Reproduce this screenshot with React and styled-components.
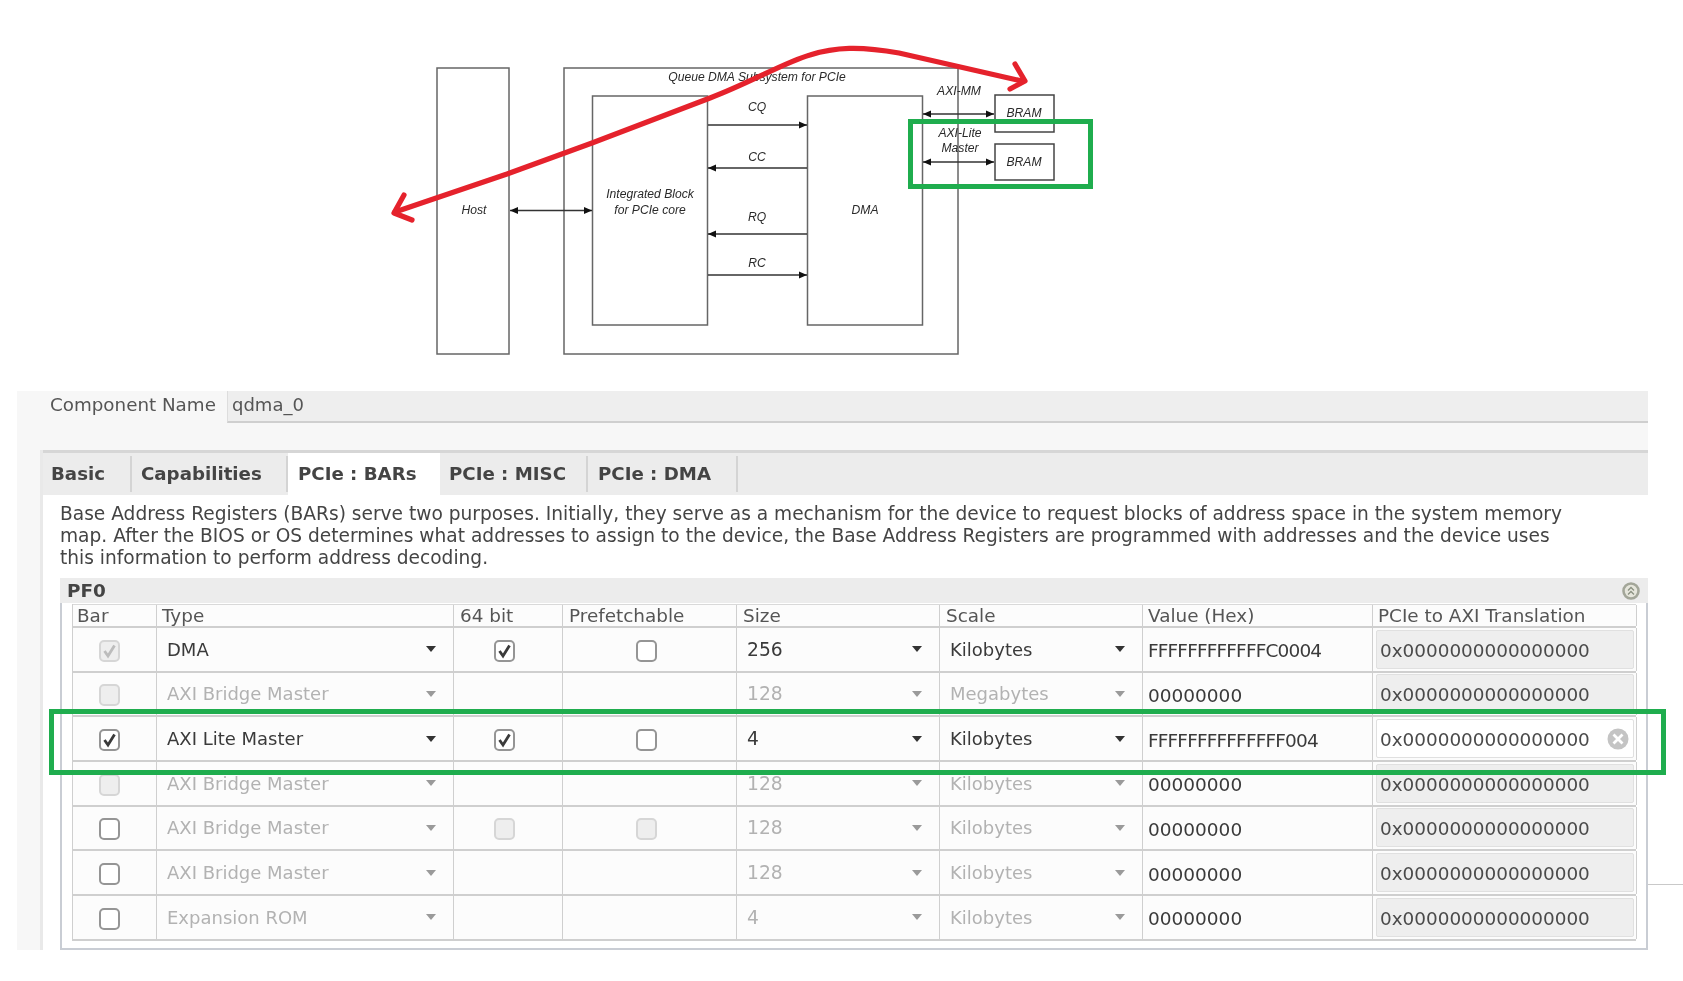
import React from 'react';
import styled, { createGlobalStyle } from 'styled-components';

const Global = createGlobalStyle`
  html, body { margin: 0; padding: 0; background: #fff; }
  body { font-family: "DejaVu Sans", sans-serif; color: #444; }
`;
const Page = styled.div`
  position: relative;
  width: 1683px;
  height: 981px;
  overflow: hidden;
  background: #fff;
  filter: blur(0.35px);
`;
const DiagramArea = styled.div`
  height: 391px;
`;
const Diagram = styled.svg`
  display: block;
  text {
    font-family: "Liberation Sans", sans-serif;
    font-style: italic;
    font-size: 13.5px;
    fill: #2a2a2a;
    text-anchor: middle;
  }
`;
const Panel = styled.div`
  margin-left: 17px;
  width: 1631px;
  height: 559px;
  background: #f7f7f7;
  display: flex;
  flex-direction: column;
`;
const NameRow = styled.div`
  display: flex;
  height: 32px;
  flex: none;
`;
const NameLabel = styled.div`
  width: 210px;
  padding-left: 33px;
  box-sizing: border-box;
  font-size: 18.3px;
  line-height: 28px;
  color: #555;
`;
const NameInput = styled.div`
  flex: 1;
  background: #eeeeee;
  border-bottom: 2px solid #cfcfcf;
  border-left: 1px solid #ddd;
  padding-left: 4px;
  font-size: 18px;
  line-height: 28px;
  color: #555;
  height: 30px;
`;
const TabPanel = styled.div`
  margin: 27px 0 0 23px;
  flex: 1;
  display: flex;
  flex-direction: column;
  background: #fff;
  border-left: 3px solid #e9e9e9;
  min-height: 0;
`;
const TabBar = styled.div`
  display: flex;
  flex: none;
  height: 42px;
  border-top: 3px solid #d6d6d6;
  background: #ececec;
`;
const Tab = styled.div`
  box-sizing: border-box;
  width: ${p => p.$w}px;
  padding-left: ${p => p.$pad}px;
  font-weight: 700;
  font-size: 18.2px;
  color: #444;
  background: ${p => (p.$active ? '#fff' : 'transparent')};
  border-right: ${p => (p.$active ? '0' : '2px solid #d4d4d4')};
  margin-top: ${p => (p.$active ? '0' : '3px')};
  height: ${p => (p.$active ? '42px' : '36px')};
  line-height: ${p => (p.$active ? '42px' : '36px')};
`;
const Intro = styled.div`
  margin: 8px 0 0 17px;
  width: 1560px;
  font-size: 18.6px;
  line-height: 22.2px;
  color: #444;
  height: 75px;
  flex: none;
  white-space: nowrap;
`;
const IntroLine = styled.div``;
const Group = styled.div`
  margin-left: 17px;
  width: 1588px;
  box-sizing: border-box;
  flex: 1;
  min-height: 0;
  display: flex;
  flex-direction: column;
  border-left: 2px solid #c9cdd4;
  border-right: 2px solid #c9cdd4;
  border-bottom: 2px solid #c9cdd4;
`;
const GroupHead = styled.div`
  display: flex;
  align-items: center;
  justify-content: space-between;
  flex: none;
  height: 25px;
  margin-left: -2px;
  margin-right: -2px;
  background: #ececec;
  padding: 0 7px 0 7px;
  font-weight: 700;
  font-size: 18.4px;
  color: #444;
`;
const Table = styled.div`
  margin: 1px 10px 0 10px;
  border-left: 1px solid #cfcfcf;
`;
const Row = styled.div`
  display: grid;
  grid-template-columns: 84px 297px 109px 174px 203px 203px 230px 264px;
  box-sizing: border-box;
  height: ${p => (p.$head ? '24px' : '44.67px')};
  border-top: ${p => (p.$head ? '1px' : '0')} solid #d9d9d9;
  border-bottom: 2px solid #cfcfcf;
  background: #fcfcfc;
`;
const Cell = styled.div`
  box-sizing: border-box;
  display: flex;
  align-items: center;
  border-right: 1px solid #cfcfcf;
  min-width: 0;
`;
const CheckHolder = styled(Cell)`
  justify-content: center;
  padding-top: 3px;
  padding-right: ${p => p.$inset}px;
`;
const HeadCell = styled(Cell)`
  padding-left: ${p => p.$pad}px;
  font-size: 18.4px;
  color: #555;
`;
const Check = styled.div`
  box-sizing: border-box;
  width: 21px;
  height: 22px;
  border-radius: 5px;
  border: 2px solid ${p => (p.$disabled ? '#d6d6d6' : '#959595')};
  background: ${p => (p.$disabled ? '#eeeeee' : '#fff')};
  display: flex;
  align-items: center;
  justify-content: center;
  svg { display: block; }
`;
const Select = styled.div`
  flex: 1;
  display: flex;
  align-items: center;
  justify-content: space-between;
  padding: 0 17px 0 10px;
  font-size: ${p => (p.$numeric ? '18.7px' : '18px')};
  color: ${p => (p.$disabled ? '#b2b2b2' : '#3a3a3a')};
`;
const Caret = styled.span`
  width: 0;
  height: 0;
  border-left: 5px solid transparent;
  border-right: 5px solid transparent;
  border-top: 6px solid ${p => (p.$disabled ? '#9a9a9a' : '#333')};
`;
const Value = styled.div`
  padding: 3px 0 0 5px;
  font-size: 18.5px;
  letter-spacing: ${p => (p.$tight ? '-0.85px' : '0')};
  color: #3a3a3a;
`;
const Translation = styled.div`
  position: relative;
  margin-left: 3px;
  box-sizing: border-box;
  width: 258px;
  height: 39px;
  padding: 2px 0 0 3px;
  display: flex;
  align-items: center;
  font-size: 18.4px;
  color: #4a4a4a;
  border: 1px solid #e0e0e0;
  border-radius: 2px;
  background: ${p => (p.$active ? '#fff' : '#eeeeee')};
`;
const ClearIcon = styled.svg`
  position: absolute;
  right: 4px;
  top: 8px;
`;
const Highlight = styled.div`
  position: absolute;
  box-sizing: border-box;
  border: 5px solid #1fad4e;
  pointer-events: none;
  left: ${p => p.$x}px;
  top: ${p => p.$y}px;
  width: ${p => p.$w}px;
  height: ${p => p.$h}px;
`;
const Hairline = styled.div`
  position: absolute;
  left: 1648px;
  top: 884px;
  width: 35px;
  height: 1px;
  background: #c9c9c9;
`;

const Tick = ({ color = '#3a3a3a' }) => (
  <svg width="15" height="16" viewBox="0 0 15 16">
    <path d="M2.5 8 L6 13 L12.5 2.5" fill="none" stroke={color} strokeWidth="2.8" />
  </svg>
);

const Arrow = ({ x1, x2, y, both }) => {
  const d = x2 > x1 ? 1 : -1;
  return (
    <g>
      <line x1={x1} y1={y} x2={x2} y2={y} stroke="#333" strokeWidth="1.4" />
      <polygon points={`${x2},${y} ${x2 - 8 * d},${y - 3.5} ${x2 - 8 * d},${y + 3.5}`} fill="#111" />
      {both && <polygon points={`${x1},${y} ${x1 + 8 * d},${y - 3.5} ${x1 + 8 * d},${y + 3.5}`} fill="#111" />}
    </g>
  );
};

const Box = ({ x, y, w, h, s = '#666' }) => (
  <rect x={x} y={y} width={w} height={h} fill="none" stroke={s} strokeWidth="1.5" />
);

const Label = ({ x, y, children }) => (
  <text transform={`translate(${x} ${y}) scale(0.9 1)`}>{children}</text>
);

const rows = [
  { bar: 'locked', type: 'DMA', typeOff: false, b64: 'on', pre: 'off', size: '256', scale: 'Kilobytes', scaleOff: false, value: 'FFFFFFFFFFFFC0004', tight: true },
  { bar: 'dis', type: 'AXI Bridge Master', typeOff: true, size: '128', scale: 'Megabytes', scaleOff: true, value: '00000000' },
  { bar: 'on', type: 'AXI Lite Master', typeOff: false, b64: 'on', pre: 'off', size: '4', scale: 'Kilobytes', scaleOff: false, value: 'FFFFFFFFFFFFFF004', tight: true, active: true },
  { bar: 'dis', type: 'AXI Bridge Master', typeOff: true, size: '128', scale: 'Kilobytes', scaleOff: true, value: '00000000' },
  { bar: 'off', type: 'AXI Bridge Master', typeOff: true, b64: 'dis', pre: 'dis', size: '128', scale: 'Kilobytes', scaleOff: true, value: '00000000' },
  { bar: 'off', type: 'AXI Bridge Master', typeOff: true, size: '128', scale: 'Kilobytes', scaleOff: true, value: '00000000' },
  { bar: 'off', type: 'Expansion ROM', typeOff: true, size: '4', scale: 'Kilobytes', scaleOff: true, value: '00000000' },
];

const CheckCell = ({ state, inset = 7 }) => {
  if (!state) return <Cell />;
  return (
    <CheckHolder $inset={inset}>
      {state === 'locked' && <Check $disabled><Tick color="#bcbcbc" /></Check>}
      {state === 'on' && <Check><Tick /></Check>}
      {state === 'off' && <Check />}
      {state === 'dis' && <Check $disabled />}
    </CheckHolder>
  );
};

export default function App() {
  return (
    <Page>
      <Global />
      <DiagramArea>
        <Diagram width="1683" height="391" viewBox="0 0 1683 391">
          <Box x={437} y={68} w={72} h={286} />
          <Box x={564} y={68} w={394} h={286} />
          <Box x={592.5} y={96} w={115} h={229} />
          <Box x={807.5} y={96} w={115} h={229} />
          <Box x={995} y={95} w={59} h={37} s="#444" />
          <Box x={995} y={144} w={59} h={36} s="#444" />
          <Arrow x1={510} x2={592} y={210.5} both />
          <Arrow x1={708} x2={807} y={125} />
          <Arrow x1={807} x2={708} y={168} />
          <Arrow x1={807} x2={708} y={234} />
          <Arrow x1={708} x2={807} y={275} />
          <Arrow x1={923} x2={994} y={114} both />
          <Arrow x1={923} x2={994} y={162} both />
          <Label x={757} y={81}>Queue DMA Subsystem for PCIe</Label>
          <Label x={757} y={111}>CQ</Label>
          <Label x={757} y={161}>CC</Label>
          <Label x={757} y={221}>RQ</Label>
          <Label x={757} y={267}>RC</Label>
          <Label x={474} y={214}>Host</Label>
          <Label x={650} y={198}>Integrated Block</Label>
          <Label x={650} y={214}>for PCIe core</Label>
          <Label x={865} y={214}>DMA</Label>
          <Label x={959} y={95}>AXI-MM</Label>
          <Label x={960} y={137}>AXI-Lite</Label>
          <Label x={960} y={152}>Master</Label>
          <Label x={1024} y={117}>BRAM</Label>
          <Label x={1024} y={166}>BRAM</Label>
          <path d="M395 212 L507 174 L592 143 L710 98 C750 83 785 62 810 55 C835 47 860 46 899 53 L1022 81" fill="none" stroke="#e5222c" strokeWidth="5.2" strokeLinecap="round" strokeLinejoin="round" />
          <path d="M404 195 L394 213 L412 220" fill="none" stroke="#e5222c" strokeWidth="5.2" strokeLinecap="round" strokeLinejoin="round" />
          <path d="M1015 64 L1025 81 L1010 89" fill="none" stroke="#e5222c" strokeWidth="5.2" strokeLinecap="round" strokeLinejoin="round" />
        </Diagram>
      </DiagramArea>
      <Panel>
        <NameRow>
          <NameLabel>Component Name</NameLabel>
          <NameInput>qdma_0</NameInput>
        </NameRow>
        <TabPanel>
          <TabBar>
            <Tab $w={89} $pad={8}>Basic</Tab>
            <Tab $w={156} $pad={9}>Capabilities</Tab>
            <Tab $w={152} $pad={10} $active>PCIe : BARs</Tab>
            <Tab $w={148} $pad={9}>PCIe : MISC</Tab>
            <Tab $w={150} $pad={10}>PCIe : DMA</Tab>
          </TabBar>
          <Intro>
            <IntroLine>Base Address Registers (BARs) serve two purposes. Initially, they serve as a mechanism for the device to request blocks of address space in the system memory</IntroLine>
            <IntroLine>map. After the BIOS or OS determines what addresses to assign to the device, the Base Address Registers are programmed with addresses and the device uses</IntroLine>
            <IntroLine>this information to perform address decoding.</IntroLine>
          </Intro>
          <Group>
            <GroupHead>
              PF0
              <svg width="20" height="20" viewBox="0 0 20 20">
                <circle cx="10" cy="10" r="7.5" fill="#e6e6dc" stroke="#a3a699" strokeWidth="2.6" />
                <path d="M7 9.5 L10 6.5 L13 9.5 M7 13.5 L10 10.5 L13 13.5" fill="none" stroke="#8a9080" strokeWidth="1.3" />
              </svg>
            </GroupHead>
            <Table>
              <Row $head>
                <HeadCell $pad={4}>Bar</HeadCell>
                <HeadCell $pad={5}>Type</HeadCell>
                <HeadCell $pad={6}>64 bit</HeadCell>
                <HeadCell $pad={6}>Prefetchable</HeadCell>
                <HeadCell $pad={6}>Size</HeadCell>
                <HeadCell $pad={6}>Scale</HeadCell>
                <HeadCell $pad={5}>Value (Hex)</HeadCell>
                <HeadCell $pad={5}>PCIe to AXI Translation</HeadCell>
              </Row>
              {rows.map((r, i) => (
                <Row key={i}>
                  <CheckCell state={r.bar} inset={10} />
                  <Cell>
                    <Select $disabled={r.typeOff}>{r.type}<Caret $disabled={r.typeOff} /></Select>
                  </Cell>
                  <CheckCell state={r.b64} />
                  <CheckCell state={r.pre} />
                  <Cell>
                    <Select $numeric $disabled={r.typeOff}>{r.size}<Caret $disabled={r.typeOff} /></Select>
                  </Cell>
                  <Cell>
                    <Select $disabled={r.scaleOff}>{r.scale}<Caret $disabled={r.scaleOff} /></Select>
                  </Cell>
                  <Cell><Value $tight={r.tight}>{r.value}</Value></Cell>
                  <Cell>
                    <Translation $active={r.active}>
                      0x0000000000000000
                      {r.active && (
                        <ClearIcon width="22" height="22" viewBox="0 0 22 22">
                          <circle cx="11" cy="11" r="10.5" fill="#c4c4c4" />
                          <path d="M6.5 6.5 L15.5 15.5 M15.5 6.5 L6.5 15.5" stroke="#fff" strokeWidth="2.8" />
                        </ClearIcon>
                      )}
                    </Translation>
                  </Cell>
                </Row>
              ))}
            </Table>
          </Group>
        </TabPanel>
      </Panel>
      <Hairline />
      <Highlight $x={908} $y={119} $w={185} $h={70} />
      <Highlight $x={49} $y={709} $w={1617} $h={66} />
    </Page>
  );
}
